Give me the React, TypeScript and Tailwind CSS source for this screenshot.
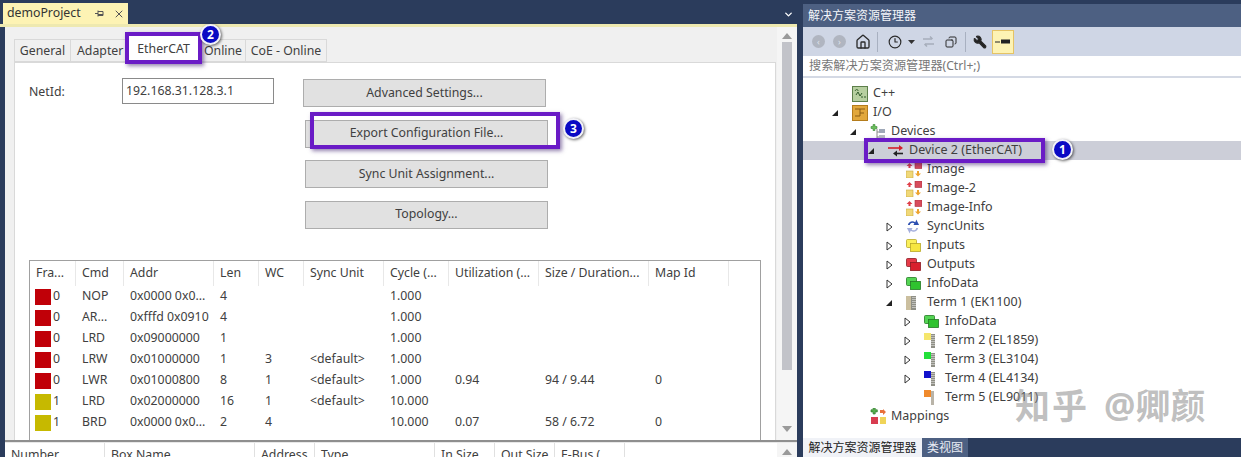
import { ChevronDown, Clock3, Copy, House, Wrench, X } from "lucide-react";

const FONT = "font-['Noto_Sans','Noto_Sans_CJK_SC',sans-serif]";

const frameColumns = [
  { label: "Fra...", width: "w-[46px]" },
  { label: "Cmd", width: "w-[48px]" },
  { label: "Addr", width: "w-[90px]" },
  { label: "Len", width: "w-[45px]" },
  { label: "WC", width: "w-[45px]" },
  { label: "Sync Unit", width: "w-[80px]" },
  { label: "Cycle (...", width: "w-[65px]" },
  { label: "Utilization (...", width: "w-[90px]" },
  { label: "Size / Duration...", width: "w-[110px]" },
  { label: "Map Id", width: "w-[80px]" },
];

const frameRows = [
  ["0", "NOP", "0x0000 0x0...", "4", "", "", "1.000", "", "", ""],
  ["0", "AR...", "0xfffd 0x0910", "4", "", "", "1.000", "", "", ""],
  ["0", "LRD", "0x09000000", "1", "", "", "1.000", "", "", ""],
  ["0", "LRW", "0x01000000", "1", "3", "<default>", "1.000", "", "", ""],
  ["0", "LWR", "0x01000800", "8", "1", "<default>", "1.000", "0.94", "94 / 9.44", "0"],
  ["1", "LRD", "0x02000000", "16", "1", "<default>", "10.000", "", "", ""],
  ["1", "BRD", "0x0000 0x0...", "2", "4", "", "10.000", "0.07", "58 / 6.72", "0"],
];

const boxColumns = [
  { label: "Number", width: "w-[100px]" },
  { label: "Box Name", width: "w-[150px]" },
  { label: "Address", width: "w-[60px]" },
  { label: "Type", width: "w-[120px]" },
  { label: "In Size", width: "w-[60px]" },
  { label: "Out Size", width: "w-[60px]" },
  { label: "E-Bus (...", width: "w-[70px]" },
];

type IconKind =
  | "cpp" | "io" | "devices" | "device" | "image" | "sync" | "inputs" | "outputs" | "infodata"
  | "coupler" | "termYellow" | "termGreen" | "termBlue" | "termEnd" | "mappings";

const tree: { label: string; level: number; icon: IconKind; arrow?: "open" | "closed" }[] = [
  { label: "C++", level: 0, icon: "cpp" },
  { label: "I/O", level: 0, icon: "io", arrow: "open" },
  { label: "Devices", level: 1, icon: "devices", arrow: "open" },
  { label: "Device 2 (EtherCAT)", level: 2, icon: "device", arrow: "open" },
  { label: "Image", level: 3, icon: "image" },
  { label: "Image-2", level: 3, icon: "image" },
  { label: "Image-Info", level: 3, icon: "image" },
  { label: "SyncUnits", level: 3, icon: "sync", arrow: "closed" },
  { label: "Inputs", level: 3, icon: "inputs", arrow: "closed" },
  { label: "Outputs", level: 3, icon: "outputs", arrow: "closed" },
  { label: "InfoData", level: 3, icon: "infodata", arrow: "closed" },
  { label: "Term 1 (EK1100)", level: 3, icon: "coupler", arrow: "open" },
  { label: "InfoData", level: 4, icon: "infodata", arrow: "closed" },
  { label: "Term 2 (EL1859)", level: 4, icon: "termYellow", arrow: "closed" },
  { label: "Term 3 (EL3104)", level: 4, icon: "termGreen", arrow: "closed" },
  { label: "Term 4 (EL4134)", level: 4, icon: "termBlue", arrow: "closed" },
  { label: "Term 5 (EL9011)", level: 4, icon: "termEnd" },
  { label: "Mappings", level: 1, icon: "mappings" },
];

// level -> left padding, written out so tailwind sees the classes
const indent = ["pl-[28px]", "pl-[46px]", "pl-[64px]", "pl-[82px]", "pl-[100px]"];

function Stack({ back, front, line }: { back: string; front: string; line: string }) {
  return (
    <svg width="15" height="13" viewBox="0 0 15 13">
      <rect x="0.5" y="0.5" width="10" height="8" rx="1" fill={back} stroke={line} strokeWidth="0.8" />
      <rect x="4.5" y="4.5" width="10" height="8" fill={front} stroke={line} strokeWidth="0.8" />
    </svg>
  );
}

function Terminal({ color, grid = true }: { color: string; grid?: boolean }) {
  return (
    <svg width="12" height="15" viewBox="0 0 12 15">
      <rect x="0" y="0" width="7" height="7" fill={color} />
      {grid ? (
        <>
          <rect x="7" y="1" width="4" height="14" fill="#8f8f86" />
          <path d="M8 2v12M10 2v12" stroke="#f2f2f2" strokeWidth="1" strokeDasharray="1 1" />
        </>
      ) : (
        <rect x="7" y="1" width="3" height="14" fill="#b9b4a8" />
      )}
    </svg>
  );
}

function TreeIcon({ kind }: { kind: IconKind }) {
  switch (kind) {
    case "cpp":
      return (
        <svg width="16" height="16" viewBox="0 0 16 16">
          <rect x="0.5" y="0.5" width="15" height="15" fill="#b7cfa0" stroke="#5d7f4a" />
          <path d="M3 5c1-2 3-2 3 0M4 9l2-3 2 4 2-3M9 11h2M12 11h2" stroke="#2f5a2a" fill="none" />
        </svg>
      );
    case "io":
      return (
        <svg width="16" height="16" viewBox="0 0 16 16">
          <rect x="0.5" y="0.5" width="15" height="15" fill="#e2a83c" stroke="#b47c1c" />
          <path d="M3 4h10M3 11h5M8 4v4h4M8 8v3" stroke="#8a5c14" fill="none" />
        </svg>
      );
    case "devices":
      return (
        <svg width="16" height="16" viewBox="0 0 16 16">
          <path d="M3 0.5h2v2h2v2h-2v2h-2v-2h-2v-2h2z" fill="#6cbf5c" stroke="#3d8a38" strokeWidth="0.6" />
          <path d="M7 5v9M7 8h3M7 13h3" stroke="#8a8a8a" fill="none" />
          <rect x="9" y="5" width="6" height="4" fill="#9fa8b8" />
          <rect x="9" y="11" width="6" height="4" fill="#b8bcc4" />
        </svg>
      );
    case "device":
      return (
        <svg width="16" height="12" viewBox="0 0 16 12">
          <path d="M0 3h12" stroke="#d2202c" strokeWidth="1.6" />
          <path d="M11 0l4 3-4 3z" fill="#d2202c" />
          <path d="M15 8.5H8" stroke="#222" strokeWidth="1.6" />
          <path d="M9 5.5l-4 3 4 3z" fill="#222" />
        </svg>
      );
    case "image":
      return (
        <svg width="16" height="16" viewBox="0 0 16 16">
          <path d="M3.5 1l3 3h-2v2h-2v-2h-2z" fill="#e0404a" />
          <rect x="9" y="0" width="7" height="6.5" fill="#d84c5c" stroke="#a83040" strokeWidth="0.6" />
          <rect x="0" y="9" width="7" height="7" fill="#f0d878" stroke="#c8a840" strokeWidth="0.6" />
          <path d="M11 9h2v2.5h2l-3 3-3-3h2z" fill="#eda32e" />
        </svg>
      );
    case "sync":
      return (
        <svg width="14" height="17" viewBox="0 0 15 17">
          <path d="M2 7c1-4 5-5 8-3l1-3 3 6-6 0 1-2c-2-1-4-1-5 2z" fill="#2c4fb0" />
          <path d="M13 10c-1 4-5 5-8 3l-1 3-3-6 6 0-1 2c2 1 4 1 5-2z" fill="#a4aedc" />
        </svg>
      );
    case "inputs":
      return <Stack back="#fbf05a" front="#f6e640" line="#b8a828" />;
    case "outputs":
      return <Stack back="#e63a48" front="#d8202e" line="#8c1c24" />;
    case "infodata":
      return <Stack back="#54d454" front="#2fc32f" line="#257a25" />;
    case "coupler":
      return (
        <svg width="11" height="14" viewBox="0 0 11 14">
          <rect x="0" y="0" width="5" height="14" fill="#cbbf9f" />
          <rect x="5" y="0" width="5" height="14" fill="#8f8f86" />
          <path d="M7 1v12M9 1v12" stroke="#f2f2f2" strokeDasharray="1 1" />
        </svg>
      );
    case "termYellow":
      return <Terminal color="#f5e66c" />;
    case "termGreen":
      return <Terminal color="#22e03a" />;
    case "termBlue":
      return <Terminal color="#1212cc" />;
    case "termEnd":
      return <Terminal color="#f08a2c" grid={false} />;
    case "mappings":
      return (
        <svg width="17" height="17" viewBox="0 0 17 17">
          <path d="M3 1h3v3h3v3h-3v3h-3v-3h-3v-3h3z" transform="translate(1 -1) scale(0.7)" fill="#58b050" stroke="#2f7a2c" />
          <path d="M10 2h3v-1l3 3-3 3v-2h-3z" fill="#e8703a" />
          <rect x="1" y="9" width="7" height="7" fill="#d83c50" />
          <rect x="10" y="9" width="6" height="7" fill="#f0d458" />
        </svg>
      );
  }
}

function TreeArrow({ kind }: { kind?: "open" | "closed" }) {
  if (!kind) return <span className="w-[21px] shrink-0" />;
  return (
    <span className="w-[21px] shrink-0 flex items-center">
      {kind === "open" ? (
        <svg width="8" height="8" viewBox="0 0 8 8">
          <path d="M7 1v6H1z" fill="#222" />
        </svg>
      ) : (
        <svg width="7" height="10" viewBox="0 0 7 10" className="ml-[1px]">
          <path d="M1 1l5 4-5 4z" fill="#fff" stroke="#333" />
        </svg>
      )}
    </span>
  );
}

function FormButton({ label, className }: { label: string; className: string }) {
  return (
    <button className={`h-[28px] bg-[#e1e1e1] border border-[#adadad] text-[12.3px] text-[#404040] ${className}`}>
      {label}
    </button>
  );
}

function Scrollbar({ thumb }: { thumb: string }) {
  return (
    <div className="w-[20px] shrink-0 bg-[#f5f5f5] flex flex-col items-center pt-[6px]">
      <svg width="10" height="6" viewBox="0 0 10 6">
        <path d="M5 0l5 6H0z" fill="#9a9a9a" />
      </svg>
      <div className={`w-[10px] mt-[3px] bg-[#c2c3c9] ${thumb}`} />
      <div className="mt-auto mb-[8px]">
        <svg width="10" height="6" viewBox="0 0 10 6">
          <path d="M5 6l5-6H0z" fill="#9a9a9a" />
        </svg>
      </div>
    </div>
  );
}

function Highlight({ className }: { className: string }) {
  return (
    <div
      className={`absolute border-[4px] border-[#6a1bc6] shadow-[2px_2px_4px_rgba(60,30,110,0.55)] pointer-events-none ${className}`}
    />
  );
}

function Badge({ n, className }: { n: number; className: string }) {
  return (
    <div
      className={`absolute w-[21px] h-[21px] rounded-full bg-[#0a0ac4] border-2 border-[#f2f2f8] shadow-[1px_1px_3px_rgba(0,0,0,0.6)] text-white text-[12px] font-bold leading-none flex items-center justify-center ${className}`}
    >
      {n}
    </div>
  );
}

export default function App() {
  return (
    <div className={`relative w-[1241px] h-[457px] overflow-hidden flex bg-[#2b3c5c] text-[12.3px] text-[#404040] ${FONT}`}>
      {/* Left document */}
      <div className="w-[797px] shrink-0 flex flex-col">
        <div className="h-[24px] shrink-0 flex items-end justify-between pl-[3px] pr-[3px]">
          <div className="w-[125px] h-[21px] bg-[#fdf3b4] flex items-center pl-[4px] text-[#333]">
            <span className="w-[75px]">demoProject</span>
            <svg width="9" height="9" viewBox="0 0 9 9" className="ml-[13px]">
              <path d="M0 4.5h3M3 1.5v6M3 2.5h5v4H3M3 5.5h5" stroke="#555" fill="none" />
            </svg>
            <X size={12} className="ml-[9px] text-[#555]" strokeWidth={2} />
          </div>
          <ChevronDown size={11} className="mb-[4px] text-white" strokeWidth={3} />
        </div>
        <div className="h-[3px] shrink-0 bg-[#eee9b0]" />

        <div className="flex-1 ml-[5px] bg-[#f0f0f0] flex flex-col min-h-0">
          <div className="h-[413px] shrink-0 flex">
            <div className="flex-1 flex flex-col pt-[12px] pl-[9px] pr-[1px]">
              {/* Property tabs */}
              <div className="h-[23px] shrink-0 flex">
                <div className="w-[57px] pt-[2px] border border-[#d9d9d9] bg-[#f0f0f0] flex items-center justify-center">General</div>
                <div className="w-[55px] pt-[2px] border-y border-[#d9d9d9] flex items-center pl-[6px]">Adapter</div>
                <div className="w-[75px] -mt-[3px] h-[27px] bg-white flex items-center justify-center">EtherCAT</div>
                <div className="w-[44px] pt-[2px] border-y border-[#d9d9d9] flex items-center justify-center">Online</div>
                <div className="w-[82px] pt-[2px] border border-[#d9d9d9] flex items-center justify-center">CoE - Online</div>
              </div>

              <div className="flex-1 bg-white border border-[#d9d9d9] border-b-0 flex flex-col pl-[14px]">
                <div className="h-[197px] shrink-0 flex">
                  <div className="w-[93px] pt-[20px]">NetId:</div>
                  <div className="w-[152px] h-[26px] mt-[15px] border border-[#8a8a8a] pl-[3px] flex items-center">
                    192.168.31.128.3.1
                  </div>
                  <div className="flex flex-col gap-[12.5px] pl-[29px] pt-[16px] items-start">
                    <FormButton label="Advanced Settings..." className="w-[243px]" />
                    <FormButton label="Export Configuration File..." className="ml-[2px] w-[243px]" />
                    <FormButton label="Sync Unit Assignment..." className="ml-[2px] w-[243px]" />
                    <FormButton label="Topology..." className="ml-[2px] w-[243px]" />
                  </div>
                </div>

                {/* Frames table */}
                <div className="w-[732px] flex-1 border border-b-0 border-[#a0a0a0] flex flex-col">
                  <div className="h-[25px] shrink-0 flex">
                    {frameColumns.map((col) => (
                      <div key={col.label} className={`${col.width} border-r border-[#e8e8e8] pl-[6px] flex items-center`}>
                        {col.label}
                      </div>
                    ))}
                  </div>
                  {frameRows.map((row, i) => (
                    <div key={i} className="h-[21px] shrink-0 flex items-center">
                      {row.map((cell, c) =>
                        c === 0 ? (
                          <div key={c} className={`${frameColumns[c].width} flex items-center pl-[5px] gap-[2px]`}>
                            <span className={`w-[16px] h-[16px] ${cell === "0" ? "bg-[#c00008]" : "bg-[#c6b900]"}`} />
                            {cell}
                          </div>
                        ) : (
                          <div key={c} className={`${frameColumns[c].width} pl-[6px] whitespace-nowrap`}>
                            {cell}
                          </div>
                        )
                      )}
                    </div>
                  ))}
                </div>
              </div>
            </div>
            <Scrollbar thumb="h-[328px]" />
          </div>

          <div className="h-[3px] shrink-0 bg-[#8f8f8f] border-b border-[#e8e8e8]" />
          <div className="flex-1 flex">
            <div className="flex-1 bg-white flex overflow-hidden">
              {boxColumns.map((col) => (
                <div key={col.label} className={`${col.width} border-r border-[#e0e0e0] pl-[6px] pt-[3px] whitespace-nowrap`}>
                  {col.label}
                </div>
              ))}
            </div>
            <Scrollbar thumb="h-0" />
          </div>
        </div>
      </div>

      {/* Right solution explorer */}
      <div className="flex-1 ml-[6px] flex flex-col pt-[4px]">
        <div className="h-[23px] shrink-0 bg-[#4d6082] text-[#f4f6fa] text-[12px] flex items-center pl-[5px]">
          解决方案资源管理器
        </div>
        <div className="h-[29px] shrink-0 bg-[#cfd6e5] flex items-center pl-[9px] text-[#2b2b2b]">
          <span className="w-[13px] h-[13px] rounded-full bg-[#b0b5c0] flex items-center justify-center text-[9px] leading-none text-[#dfe3ec]">‹</span>
          <span className="ml-[8px] w-[13px] h-[13px] rounded-full bg-[#b0b5c0] flex items-center justify-center text-[9px] leading-none text-[#dfe3ec]">›</span>
          <House size={16} className="ml-[9px]" />
          <span className="ml-[6px] w-px h-[20px] bg-[#a8b0c0]" />
          <Clock3 size={14} className="ml-[10px]" />
          <svg width="7" height="4" viewBox="0 0 7 4" className="ml-[6px]"><path d="M0 0h7L3.5 4z" fill="#333" /></svg>
          <svg width="13" height="13" viewBox="0 0 13 13" className="ml-[7px]">
            <path d="M1 4h9M8 1.5L10.5 4M12 9H3M5 11.5L2.5 9" stroke="#a6adba" strokeWidth="1.5" fill="none" />
          </svg>
          <Copy size={12} className="ml-[10px] -scale-x-100" />
          <span className="ml-[8px] w-px h-[20px] bg-[#a8b0c0]" />
          <Wrench size={14} className="ml-[7px] -scale-x-100" fill="#222" />
          <div className="ml-[5px] w-[22px] h-[24px] bg-[#fdf3b4] border border-[#e5c365] flex items-center justify-center">
            <svg width="16" height="5" viewBox="0 0 16 5">
              <path d="M0 3h5" stroke="#222" />
              <rect x="6" y="0.5" width="9" height="4" fill="#222" />
            </svg>
          </div>
        </div>
        <div className="h-[22px] shrink-0 bg-white text-[#777] text-[12.15px] flex items-center pl-[6px] pt-[1px] border-b-2 border-[#d4d9e4]">
          搜索解决方案资源管理器(Ctrl+;)
        </div>
        <div className="flex-1 bg-white pt-[6px] overflow-hidden text-[12.5px]">
          {tree.map((row, i) => (
            <div
              key={i}
              className={`h-[19px] flex items-center ${indent[row.level]} ${i === 3 ? "bg-[#ccced8]" : ""}`}
            >
              <TreeArrow kind={row.arrow} />
              <span className="w-[21px] shrink-0 flex items-center">
                <TreeIcon kind={row.icon} />
              </span>
              <span className="whitespace-nowrap">{row.label}</span>
            </div>
          ))}
        </div>
        <div className="h-[19px] shrink-0 flex text-[12px]">
          <div className="w-[119px] bg-[#f0f2f7] flex items-center justify-center text-[#222]">解决方案资源管理器</div>
          <div className="w-[46px] bg-[#4d6082] text-[#e8ecf4] flex items-center justify-center">类视图</div>
        </div>
      </div>

      {/* Annotations drawn over the screenshot */}
      <Highlight className="left-[125px] top-[32px] w-[77px] h-[32px]" />
      <Highlight className="left-[310px] top-[112px] w-[250px] h-[37px]" />
      <Highlight className="left-[864px] top-[138px] w-[181px] h-[25px]" />
      <Badge n={2} className="left-[200px] top-[24px]" />
      <Badge n={3} className="left-[563px] top-[118px]" />
      <Badge n={1} className="left-[1052px] top-[139px]" />
      <div className="absolute left-[1015px] top-[388px] flex text-[#8a8a8a]/55 text-[35px] font-bold leading-none whitespace-nowrap pointer-events-none">
        <span className="tracking-[2px]">知乎</span>
        <span className="ml-[15px]">@卿颜</span>
      </div>
    </div>
  );
}
